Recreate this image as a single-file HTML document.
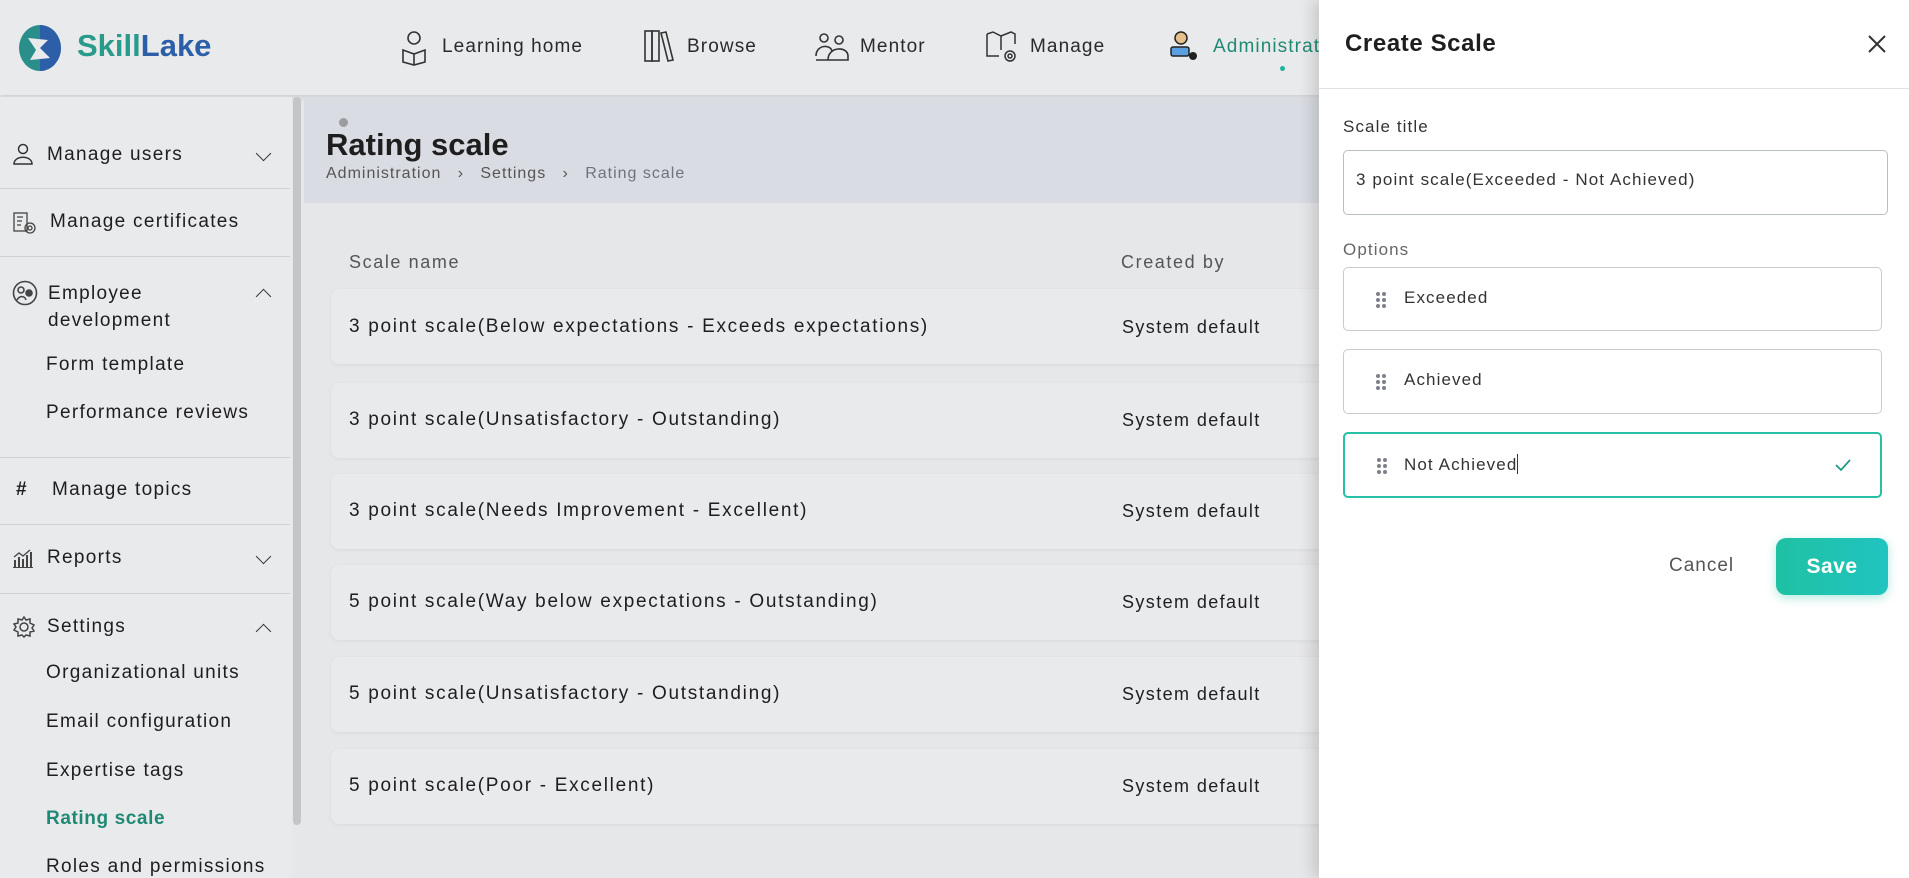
<!DOCTYPE html>
<html><head><meta charset="utf-8"><style>
*{box-sizing:border-box;margin:0;padding:0}
body{width:1909px;height:878px;overflow:hidden;background:#e6e7e9;font-family:"Liberation Sans",sans-serif;color:#1e1e1e;position:relative}
.a{position:absolute;white-space:nowrap}
.hdr{position:absolute;left:0;top:0;width:1909px;height:95px;background:#e9eaec;box-shadow:0 2px 6px rgba(0,0,0,.12)}
.nav{font-size:19px;color:#2a2a2a;top:36px;letter-spacing:1.1px}
.side{position:absolute;left:0;top:97px;width:292px;height:781px;background:#e9eaec}
.sb{position:absolute;left:293px;top:97px;width:8px;height:728px;background:#c4c5c8;border-radius:4px}
.si{font-size:19px;color:#1e1e1e;letter-spacing:1.3px}
.div{position:absolute;left:0;width:290px;height:1px;background:#cfd1d6}
.chev{position:absolute;width:11px;height:11px;border-right:1.6px solid #333;border-bottom:1.6px solid #333}
.band{position:absolute;left:304px;top:97px;width:1015px;height:106px;background:#d9dce2}
.card{position:absolute;left:331px;width:1000px;height:75px;background:#e9eaec;border-radius:8px;box-shadow:0 1px 4px rgba(0,0,0,.06)}
.rt{font-size:19px;left:349px;color:#1e1e1e;letter-spacing:1.7px}
.rc{font-size:18px;left:1122px;color:#1e1e1e;letter-spacing:1.4px}
.drawer{position:absolute;left:1319px;top:0;width:590px;height:878px;background:#fff;box-shadow:-6px 0 14px rgba(0,0,0,.15)}
.box{position:absolute;border:1.5px solid #c8cbd0;border-radius:5px;background:#fff}
.dots{position:absolute;left:32px;top:24px;width:12px;height:18px}
.dots i{position:absolute;width:4px;height:4px;border-radius:50%;background:#7d8088}
.ot{font-size:17px;color:#333;letter-spacing:1.1px}
</style></head><body>
<div class="hdr">
 <svg class="a" style="left:18px;top:24px" width="44" height="48" viewBox="0 0 44 48"><ellipse cx="22" cy="24" rx="21" ry="23" fill="#2a8f8a"/><path d="M22 1 A21 23 0 0 1 22 47 Z" fill="#2d5fa8"/><path d="M10 14 L30 16 L22 24 L32 34 L12 36 L18 26 Z" fill="#e9eaec"/></svg>
 <div class="a" style="left:77px;top:28px;font-size:31px;font-weight:bold;letter-spacing:0px"><span style="color:#2a9a8a">Skill</span><span style="color:#2d5fa8">Lake</span></div>
 <svg class="a" style="left:399px;top:30px" width="30" height="36" viewBox="0 0 30 36" fill="none" stroke="#333" stroke-width="1.6"><circle cx="15" cy="8" r="6"/><path d="M4 20 L15 24 L26 20 V32 L15 35 L4 32 Z M15 24 V35"/></svg>
 <div class="a nav" style="left:442px">Learning home</div>
 <svg class="a" style="left:643px;top:29px" width="32" height="34" viewBox="0 0 32 34" fill="none" stroke="#333" stroke-width="1.6"><rect x="2" y="2" width="7" height="30"/><rect x="9" y="2" width="7" height="30"/><path d="M18 4 L23 3 L30 31 L25 32 Z"/></svg>
 <div class="a nav" style="left:687px">Browse</div>
 <svg class="a" style="left:815px;top:32px" width="34" height="30" viewBox="0 0 34 30" fill="none" stroke="#333" stroke-width="1.6"><circle cx="9" cy="6" r="4"/><circle cx="24" cy="8" r="4"/><path d="M1 24 C1 12 17 12 17 20 M13 28 C13 14 33 14 33 24 V28 H1"/></svg>
 <div class="a nav" style="left:860px">Mentor</div>
 <svg class="a" style="left:985px;top:30px" width="36" height="36" viewBox="0 0 36 36" fill="none" stroke="#333" stroke-width="1.5"><path d="M2 4 V26 H14 M2 4 L8 2 L16 6 L26 2 L30 4 V14 M16 6 V20"/><circle cx="25" cy="26" r="5"/><circle cx="25" cy="26" r="2"/></svg>
 <div class="a nav" style="left:1030px">Manage</div>
 <svg class="a" style="left:1169px;top:30px" width="32" height="32" viewBox="0 0 32 32"><circle cx="12" cy="8" r="6" fill="#e5c08b" stroke="#222" stroke-width="1.5"/><rect x="2" y="17" width="18" height="9" rx="2" fill="#5aa0e0" stroke="#222" stroke-width="1.5"/><circle cx="24" cy="26" r="4" fill="#222"/></svg>
 <div class="a nav" style="left:1213px;color:#1f8a74">Administration</div>
 <div class="a" style="left:1280px;top:66px;width:5px;height:5px;border-radius:50%;background:#1fb39a"></div>
</div>

<div class="side"></div>
<div class="sb"></div>
<svg class="a" style="left:13px;top:143px" width="20" height="22" viewBox="0 0 20 22" fill="none" stroke="#333" stroke-width="1.5"><circle cx="10" cy="6" r="4.5"/><path d="M1 21 C1 12 19 12 19 21 Z"/></svg>
<div class="a si" style="left:47px;top:144px">Manage users</div>
<div class="chev" style="left:258px;top:148px;transform:rotate(45deg)"></div>
<div class="div" style="top:188px"></div>
<svg class="a" style="left:13px;top:211px" width="24" height="24" viewBox="0 0 24 24" fill="none" stroke="#444" stroke-width="1.3"><rect x="1" y="2" width="13" height="18"/><path d="M4 6 H10 M4 10 H9 M4 14 H8"/><circle cx="17" cy="17" r="5"/><circle cx="17" cy="17" r="2"/></svg>
<div class="a si" style="left:50px;top:211px">Manage certificates</div>
<div class="div" style="top:256px"></div>
<svg class="a" style="left:12px;top:280px" width="26" height="26" viewBox="0 0 26 26" fill="none" stroke="#444" stroke-width="1.6"><circle cx="13" cy="13" r="11.5"/><circle cx="9" cy="10" r="3"/><circle cx="17" cy="13" r="3" fill="#444"/><path d="M5 20 C8 15 13 16 14 20"/></svg>
<div class="a si" style="left:48px;top:280px;line-height:27px">Employee<br>development</div>
<div class="chev" style="left:258px;top:291px;transform:rotate(-135deg)"></div>
<div class="a si" style="left:46px;top:354px">Form template</div>
<div class="a si" style="left:46px;top:402px">Performance reviews</div>
<div class="div" style="top:457px"></div>
<div class="a si" style="left:16px;top:479px;font-weight:bold">#</div>
<div class="a si" style="left:52px;top:479px">Manage topics</div>
<div class="div" style="top:524px"></div>
<svg class="a" style="left:13px;top:548px" width="20" height="20" viewBox="0 0 20 20" fill="#444"><rect x="1" y="12" width="2" height="7"/><rect x="5" y="9" width="2" height="10"/><rect x="9" y="11" width="2" height="8"/><rect x="13" y="7" width="2" height="12"/><rect x="17" y="4" width="2" height="15"/><path d="M1 9 L6 5 L10 8 L17 2" stroke="#444" fill="none" stroke-width="1.3"/><rect x="0" y="19" width="20" height="1"/></svg>
<div class="a si" style="left:47px;top:547px">Reports</div>
<div class="chev" style="left:258px;top:551px;transform:rotate(45deg)"></div>
<div class="div" style="top:593px"></div>
<svg class="a" style="left:13px;top:616px" width="22" height="22" viewBox="0 0 22 22" fill="none" stroke="#444" stroke-width="1.5"><path d="M11 1 L13 4 L17 3 L17 7 L21 9 L19 12 L21 15 L17 16 L17 20 L13 19 L11 21 L9 19 L5 20 L5 16 L1 14 L3 11 L1 8 L5 7 L5 3 L9 4 Z"/><circle cx="11" cy="11" r="4"/></svg>
<div class="a si" style="left:47px;top:616px">Settings</div>
<div class="chev" style="left:258px;top:626px;transform:rotate(-135deg)"></div>
<div class="a si" style="left:46px;top:662px">Organizational units</div>
<div class="a si" style="left:46px;top:711px">Email configuration</div>
<div class="a si" style="left:46px;top:760px">Expertise tags</div>
<div class="a si" style="left:46px;top:808px;color:#1f8a74;font-weight:bold;letter-spacing:0.6px">Rating scale</div>
<div class="a si" style="left:46px;top:856px">Roles and permissions</div>

<div class="band"></div>
<div class="a" style="left:339px;top:118px;width:9px;height:9px;border-radius:50%;background:#9a9ca0"></div>
<div class="a" style="left:326px;top:127px;font-size:31px;font-weight:bold;color:#1e1e1e">Rating scale</div>
<div class="a" style="left:326px;top:165px;font-size:16px;color:#555;letter-spacing:1px">Administration &nbsp;&nbsp;›&nbsp;&nbsp; Settings &nbsp;&nbsp;›&nbsp;&nbsp; <span style="color:#6d737c">Rating scale</span></div>
<div class="a" style="left:349px;top:252px;font-size:18px;color:#555;letter-spacing:1.6px">Scale name</div>
<div class="a" style="left:1121px;top:252px;font-size:18px;color:#555;letter-spacing:1.6px">Created by</div>

<div class="card" style="top:289px"></div><div class="a rt" style="top:316px">3 point scale(Below expectations - Exceeds expectations)</div><div class="a rc" style="top:317px">System default</div>
<div class="card" style="top:383px"></div><div class="a rt" style="top:409px">3 point scale(Unsatisfactory - Outstanding)</div><div class="a rc" style="top:410px">System default</div>
<div class="card" style="top:474px"></div><div class="a rt" style="top:500px">3 point scale(Needs Improvement - Excellent)</div><div class="a rc" style="top:501px">System default</div>
<div class="card" style="top:565px"></div><div class="a rt" style="top:591px">5 point scale(Way below expectations - Outstanding)</div><div class="a rc" style="top:592px">System default</div>
<div class="card" style="top:657px"></div><div class="a rt" style="top:683px">5 point scale(Unsatisfactory - Outstanding)</div><div class="a rc" style="top:684px">System default</div>
<div class="card" style="top:749px"></div><div class="a rt" style="top:775px">5 point scale(Poor - Excellent)</div><div class="a rc" style="top:776px">System default</div>

<div class="drawer">
 <div class="a" style="left:26px;top:30px;font-size:24px;font-weight:bold;color:#1e1e1e;letter-spacing:0.6px">Create Scale</div>
 <svg class="a" style="left:548px;top:34px" width="20" height="20" viewBox="0 0 20 20" stroke="#333" stroke-width="2"><path d="M2 2 L18 18 M18 2 L2 18"/></svg>
 <div class="a" style="left:0;top:88px;width:590px;height:1px;background:#dfe1e5"></div>
 <div class="a ot" style="left:24px;top:117px">Scale title</div>
 <div class="box" style="left:24px;top:150px;width:545px;height:65px;border-color:#b9bdc4"><div class="a ot" style="left:12px;top:19px">3 point scale(Exceeded - Not Achieved)</div></div>
 <div class="a ot" style="left:24px;top:240px;color:#666">Options</div>
 <div class="box" style="left:24px;top:267px;width:539px;height:64px"><div class="dots"><i style="left:0;top:0"></i><i style="left:6px;top:0"></i><i style="left:0;top:6px"></i><i style="left:6px;top:6px"></i><i style="left:0;top:12px"></i><i style="left:6px;top:12px"></i></div><div class="a ot" style="left:60px;top:20px">Exceeded</div></div>
 <div class="box" style="left:24px;top:349px;width:539px;height:65px"><div class="dots"><i style="left:0;top:0"></i><i style="left:6px;top:0"></i><i style="left:0;top:6px"></i><i style="left:6px;top:6px"></i><i style="left:0;top:12px"></i><i style="left:6px;top:12px"></i></div><div class="a ot" style="left:60px;top:20px">Achieved</div></div>
 <div class="box" style="left:24px;top:432px;width:539px;height:66px;border:2px solid #27bfa5"><div class="dots"><i style="left:0;top:0"></i><i style="left:6px;top:0"></i><i style="left:0;top:6px"></i><i style="left:6px;top:6px"></i><i style="left:0;top:12px"></i><i style="left:6px;top:12px"></i></div><div class="a ot" style="left:59px;top:20px">Not Achieved<span style="display:inline-block;width:1px;height:20px;background:#1a3a8a;vertical-align:-4px"></span></div>
  <svg class="a" style="left:490px;top:24px" width="16" height="14" viewBox="0 0 16 14" fill="none" stroke="#1f9a86" stroke-width="1.8"><path d="M1 7 L6 12 L15 2"/></svg></div>
 <div class="a" style="left:350px;top:555px;font-size:19px;color:#555;letter-spacing:1px">Cancel</div>
 <div class="a" style="left:457px;top:538px;width:112px;height:57px;border-radius:10px;background:linear-gradient(90deg,#1fc1a3,#21c4c0);box-shadow:0 3px 10px rgba(31,193,163,.35);color:#fff;font-size:21px;font-weight:bold;text-align:center;line-height:57px;letter-spacing:0.5px">Save</div>
</div>
</body></html>
